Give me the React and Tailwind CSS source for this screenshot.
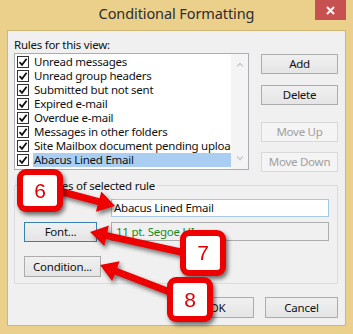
import React from 'react';

const rules = [
  'Unread messages',
  'Unread group headers',
  'Submitted but not sent',
  'Expired e-mail',
  'Overdue e-mail',
  'Messages in other folders',
  'Site Mailbox document pending upload',
  'Abacus Lined Email',
];

const font = { fontFamily: '"Segoe UI", "Noto Sans", sans-serif' };

// polygon for a fat arrow from (x1,y1) to the tip at (x2,y2)
const arrow = (x1, y1, x2, y2, w = 7, hw = 21, hl = 17) => {
  const dx = x2 - x1;
  const dy = y2 - y1;
  const len = Math.hypot(dx, dy);
  const ux = dx / len;
  const uy = dy / len;
  const nx = -uy;
  const ny = ux;
  const bx = x2 - ux * hl;
  const by = y2 - uy * hl;
  const p = [
    [x1 + (nx * w) / 2, y1 + (ny * w) / 2],
    [bx + (nx * w) / 2, by + (ny * w) / 2],
    [bx + (nx * hw) / 2, by + (ny * hw) / 2],
    [x2, y2],
    [bx - (nx * hw) / 2, by - (ny * hw) / 2],
    [bx - (nx * w) / 2, by - (ny * w) / 2],
    [x1 - (nx * w) / 2, y1 - (ny * w) / 2],
  ];
  return p.map(([x, y]) => `${x.toFixed(1)},${y.toFixed(1)}`).join(' ');
};

const Check = () => (
  <div className="w-[12px] h-[12px] border border-[#333] bg-white flex items-center justify-center shrink-0">
    <svg width="10" height="10" viewBox="0 0 10 10">
      <path d="M1.5 5.2 L4 7.8 L8.6 1.8" fill="none" stroke="#111" strokeWidth="1.8" />
    </svg>
  </div>
);

const Button = ({ children, className = '', disabled = false, focused = false }) => (
  <div
    className={`flex items-center justify-center leading-none border ${
      disabled
        ? 'border-[#d9d9d9] bg-[#f4f4f4] text-[#a0a0a0]'
        : focused
        ? 'border-[#3c7fb1] bg-gradient-to-b from-[#f0f0f0] to-[#e5e5e5] text-[#111]'
        : 'border-[#acacac] bg-gradient-to-b from-[#f0f0f0] to-[#e5e5e5] text-[#111]'
    } ${className}`}
  >
    {children}
  </div>
);

const Callout = ({ n, className }) => (
  <div
    className={`absolute bg-[#ee0000] rounded-[9px] p-[6px] drop-shadow-[2px_3px_2px_rgba(0,0,0,0.55)] ${className}`}
  >
    <div
      className="w-full h-full bg-white rounded-[3px] flex items-center justify-center text-[21px] tracking-normal text-[#e00000]"
      style={{ fontFamily: '"Liberation Sans", Arial, sans-serif' }}
    >
      {n}
    </div>
  </div>
);

export default function App() {
  return (
    <div className="relative w-[353px] h-[334px] bg-[#ebd08b] overflow-hidden" style={font}>
      {/* title bar */}
      <div className="h-[30px] grid grid-cols-[1fr_auto_1fr]">
        <div />
        <div className="pt-[3px] text-[14.5px] tracking-[-0.1px] leading-[20px] text-[#2d2d2d]">Conditional Formatting</div>
        <div className="flex justify-end pr-[7px]">
          <div className="w-[31px] h-[20px] bg-[#c75050] flex items-center justify-center">
            <svg width="9" height="9" viewBox="0 0 9 9">
              <path d="M1 1 L8 8 M8 1 L1 8" stroke="#fff" strokeWidth="2" />
            </svg>
          </div>
        </div>
      </div>

      {/* dialog body */}
      <div className="ml-[7px] w-[339px] h-[296px] border border-[#cfb672] bg-[#f0f0f0] pl-[6px] pr-[7px] flex flex-col text-[11.5px] tracking-[-0.25px] text-[#111]">
        <div className="mt-[6px] h-[15px] leading-[15px]">Rules for this view:</div>
        <div className="mt-[1px] flex justify-between">
          <div className="w-[235px] h-[117px] border border-[#abadb3] bg-white flex">
            <div className="flex-1 pt-[1px] pl-[2px] overflow-hidden">
              {rules.map((r, i) => (
                <div key={r} className="h-[14px] flex items-center">
                  <Check />
                  <div
                    className={`ml-[4px] h-[14px] leading-[14px] pl-[1px] whitespace-nowrap ${
                      i === rules.length - 1 ? 'bg-[#a9cef2] flex-1' : ''
                    }`}
                  >
                    {r}
                  </div>
                </div>
              ))}
            </div>
            <div className="w-[17px] bg-[#f4f4f4] flex flex-col justify-between items-center py-[8px]">
              <svg width="8" height="5" viewBox="0 0 8 5">
                <path d="M1 4.5 L4 1.5 L7 4.5" fill="none" stroke="#c8c8c8" strokeWidth="1.3" />
              </svg>
              <svg width="8" height="5" viewBox="0 0 8 5">
                <path d="M1 0.5 L4 3.5 L7 0.5" fill="none" stroke="#c8c8c8" strokeWidth="1.3" />
              </svg>
            </div>
          </div>
          <div className="w-[77px] flex flex-col pt-[1px]">
            <Button className="h-[20px]">Add</Button>
            <Button className="h-[20px] mt-[11px]">Delete</Button>
            <Button className="h-[20px] mt-[17px]" disabled>Move Up</Button>
            <Button className="h-[20px] mt-[10px]" disabled>Move Down</Button>
          </div>
        </div>

        <fieldset className="mt-[6px] border border-[#dcdcdc] pl-[9px] pr-[8px] pb-[6px]">
          <legend className="-ml-[6px] px-[2px] leading-[15px]">Properties of selected rule</legend>
          <div className="grid grid-cols-[87px_1fr] gap-y-[5px] mt-[6px]">
            <div />
            <div className="h-[18px] border border-[#a9c7e8] bg-white pl-[2px] leading-[16px]">Abacus Lined Email</div>
            <Button className="h-[20px] w-[73px]" focused>Font...</Button>
            <div className="h-[19px] border border-[#adadad] bg-[#f0f0f0] pl-[4px] leading-[17px] text-[#178a1c]">11 pt. Segoe UI</div>
            <Button className="h-[21px] w-[77px] mt-[9px]">Condition...</Button>
          </div>
        </fieldset>

        <div className="mt-[13px] flex justify-end gap-[11px]">
          <Button className="w-[73px] h-[21px]">OK</Button>
          <Button className="w-[73px] h-[21px]">Cancel</Button>
        </div>
      </div>

      {/* red annotation arrows and number callouts */}
      <svg className="absolute left-0 top-0 drop-shadow-[2px_3px_2px_rgba(0,0,0,0.5)]" width="353" height="334">
        <polygon points={arrow(55, 190, 115, 206)} fill="#ee0000" />
        <polygon points={arrow(190, 254, 90, 232)} fill="#ee0000" />
        <polygon points={arrow(175, 294, 100, 265)} fill="#ee0000" />
      </svg>
      <Callout n="6" className="left-[17px] top-[169px] w-[46px] h-[43px]" />
      <Callout n="7" className="left-[180px] top-[230px] w-[46px] h-[46px]" />
      <Callout n="8" className="left-[167px] top-[277px] w-[46px] h-[45px]" />
    </div>
  );
}
